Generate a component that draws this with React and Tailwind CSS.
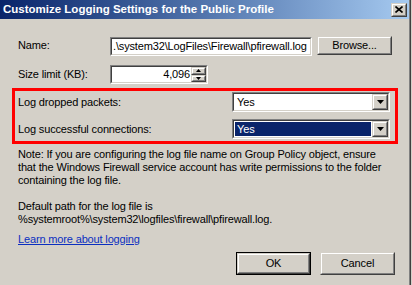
import React from "react";

function Sunken({ className = "", innerClass = "", children }) {
  return (
    <div className={`border border-[#808080] border-r-white border-b-white ${className}`}>
      <div className={`h-full w-full border border-[#404040] border-r-[#d4d0c8] border-b-[#d4d0c8] ${innerClass}`}>
        {children}
      </div>
    </div>
  );
}

function Raised({ className = "", innerClass = "", children }) {
  return (
    <div className={`border border-[#d4d0c8] border-r-[#404040] border-b-[#404040] bg-[#d4d0c8] ${className}`}>
      <div className={`h-full w-full border border-white border-r-[#808080] border-b-[#808080] flex items-center justify-center ${innerClass}`}>
        {children}
      </div>
    </div>
  );
}

function DownArrow() {
  return (
    <svg width="7" height="4" viewBox="0 0 7 4">
      <path d="M0 0h7L3.5 4z" fill="#000" />
    </svg>
  );
}

function Combo({ selected }) {
  return (
    <Sunken className="w-[158px] h-[20px]" innerClass="flex bg-white">
      <div className="flex-1 p-[1px] flex">
        <div
          className={`flex-1 flex items-center pl-[2px] ${
            selected ? "bg-[#0a246a] text-white" : "text-black"
          }`}
        >
          Yes
        </div>
      </div>
      <Raised className="w-[16px] h-full">
        <DownArrow />
      </Raised>
    </Sunken>
  );
}

export default function App() {
  return (
    <div
      className="w-[412px] h-[285px] bg-[#d4d0c8] flex overflow-hidden text-[11px] tracking-[-0.15px] text-black"
      style={{ fontFamily: '"Liberation Sans", Arial, sans-serif' }}
    >
      <div className="w-[409px] flex flex-col">
        {/* Title bar */}
        <div className="h-[19px] bg-gradient-to-r from-[#0a246a] to-[#a6caf0] flex items-center pl-[3px] pr-[2px]">
          <span className="text-white font-bold text-[11.5px] tracking-normal leading-none flex-1 whitespace-nowrap">
            Customize Logging Settings for the Public Profile
          </span>
          <Raised className="w-[16px] h-[14px]">
            <svg width="8" height="7" viewBox="0 0 8 7">
              <path d="M0.5 0.5L7.5 6.5M7.5 0.5L0.5 6.5" stroke="#000" strokeWidth="1.6" />
            </svg>
          </Raised>
        </div>

        {/* Name row */}
        <div className="mt-[16px] h-[20px] flex items-center">
          <div className="w-[110px] pl-[18px]">Name:</div>
          <Sunken className="w-[202px] h-[19px] mt-[3px]" innerClass="bg-white overflow-hidden flex items-center pl-[1px]">
            <span className="whitespace-nowrap">.\system32\LogFiles\Firewall\pfirewall.log</span>
          </Sunken>
          <Raised className="ml-[5px] w-[75px] h-[19px]">Browse...</Raised>
        </div>

        {/* Size row */}
        <div className="mt-[10px] h-[19px] flex items-center">
          <div className="w-[110px] pl-[18px]">Size limit (KB):</div>
          <Sunken className="w-[98px] h-[19px]" innerClass="bg-white flex">
            <div className="flex-1 flex items-center justify-end pr-[1px]">4,096</div>
            <div className="w-[15px] flex flex-col">
              <Raised className="h-1/2 w-full">
                <svg width="5" height="3" viewBox="0 0 5 3">
                  <path d="M0 3h5L2.5 0z" fill="#000" />
                </svg>
              </Raised>
              <Raised className="h-1/2 w-full">
                <svg width="5" height="3" viewBox="0 0 5 3">
                  <path d="M0 0h5L2.5 3z" fill="#000" />
                </svg>
              </Raised>
            </div>
          </Sunken>
        </div>

        {/* Red box */}
        <div className="mt-[4px] ml-[12px] w-[386px] h-[56px] border-[3px] border-[#ff0000] flex flex-col pt-[1px]">
          <div className="h-[20px] flex items-center">
            <div className="flex-1 pl-[3px]">Log dropped packets:</div>
            <div className="mr-[5px]"><Combo /></div>
          </div>
          <div className="mt-[7px] h-[20px] flex items-center">
            <div className="flex-1 pl-[3px]">Log successful connections:</div>
            <div className="mr-[5px]"><Combo selected /></div>
          </div>
        </div>

        {/* Note */}
        <div className="mt-[4px] pl-[18px] leading-[13px] whitespace-nowrap">
          Note: If you are configuring the log file name on Group Policy object, ensure
          <br />
          that the Windows Firewall service account has write permissions to the folder
          <br />
          containing the log file.
          <br />
          <br />
          Default path for the log file is
          <br />
          %systemroot%\system32\logfiles\firewall\pfirewall.log.
        </div>

        <div className="mt-[7px] pl-[18px] leading-[13px]">
          <span className="text-[#0b2fc0] underline">Learn more about logging</span>
        </div>

        {/* Buttons */}
        <div className="mt-[6px] flex justify-end pr-[14px] gap-[9px]">
          <div className="border border-black">
            <Raised className="w-[73px] h-[21px]">OK</Raised>
          </div>
          <Raised className="w-[75px] h-[23px]">Cancel</Raised>
        </div>
      </div>
      <div className="w-[1px] h-full bg-[#808080]" />
      <div className="w-[1px] h-full bg-[#404040]" />
      <div className="w-[1px] h-full bg-[#d4d0c8]" />
    </div>
  );
}
